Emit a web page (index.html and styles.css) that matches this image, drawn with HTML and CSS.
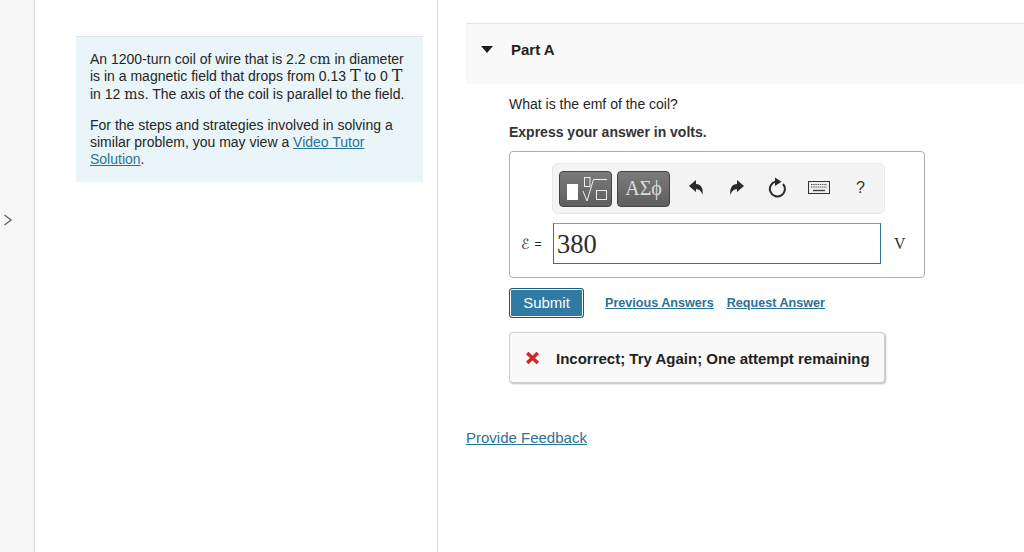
FILE: index.html
```html
<!DOCTYPE html>
<html lang="en">
<head>
<meta charset="utf-8">
<title>Part A</title>
<link rel="stylesheet" href="styles.css">
</head>
<body>
<div class="page">
  <aside class="rail">
    <svg class="rail-icon" width="10" height="12" viewBox="0 0 10 12"><path d="M1.5 1 L8 6 L1.5 11" fill="none" stroke="#666" stroke-width="1.4"/></svg>
  </aside>
  <section class="left">
    <div class="info">
      <p class="para">An 1200-turn coil of wire that is 2.2 <span class="math">cm</span> in diameter is in a magnetic field that drops from 0.13 <span class="math math-t">T</span> to 0 <span class="math math-t">T</span> in 12 <span class="math">ms</span>. The axis of the coil is parallel to the field.</p>
      <p class="para para-last">For the steps and strategies involved in solving a similar problem, you may view a <a class="link" href="#">Video Tutor Solution</a>.</p>
    </div>
  </section>
  <main class="right">
    <header class="part-head">
      <svg class="caret" width="12" height="7" viewBox="0 0 12 7"><path d="M0 0 H12 L6 7 Z" fill="#1c1c1c"/></svg>
      <h2 class="part-title">Part A</h2>
    </header>
    <div class="part-body">
      <p class="question">What is the emf of the coil?</p>
      <p class="express">Express your answer in volts.</p>
      <div class="answer">
        <div class="toolbar">
          <button class="tool-btn tool-templates" type="button" aria-label="Templates">
            <svg width="44" height="28" viewBox="0 0 44 28">
              <rect x="3" y="8" width="11" height="16" fill="#fff"/>
              <rect x="20.5" y="1.5" width="5.5" height="9" fill="none" stroke="#eee"/>
              <path d="M19 15 L23 25 L29.5 3.5 H43" fill="none" stroke="#eee" stroke-width="1"/>
              <rect x="32.5" y="14.5" width="10" height="9" fill="none" stroke="#eee"/>
            </svg>
          </button>
          <button class="tool-btn tool-greek" type="button">ΑΣϕ</button>
          <div class="tool-icons">
            <span class="tool-slot"><svg width="16" height="18" viewBox="0 0 16 18"><path d="M1 7 L8 1 V5 C13 5 15.5 9 14.5 16 C13.5 12 11 10 8 10 V13 Z" fill="#2a2a2a"/></svg></span>
            <span class="tool-slot"><svg width="16" height="18" viewBox="0 0 16 18"><path d="M15 7 L8 1 V5 C3 5 0.5 9 1.5 16 C2.5 12 5 10 8 10 V13 Z" fill="#2a2a2a"/></svg></span>
            <span class="tool-slot"><svg width="19" height="21" viewBox="0 0 19 21"><path d="M8 4.6 A7.5 7.5 0 1 0 15 7" fill="none" stroke="#2a2a2a" stroke-width="2"/><path d="M7 0.5 L13.5 4.8 L7 9 Z" fill="#2a2a2a"/></svg></span>
            <span class="tool-slot"><svg width="22" height="13" viewBox="0 0 22 13"><rect x="0.5" y="0.5" width="21" height="12" fill="#eee" stroke="#333"/><path d="M3 3.5 H19 M3 6 H19" stroke="#555" stroke-width="1.2" stroke-dasharray="1.4 .8"/><path d="M5 9.5 H17" stroke="#444" stroke-width="1.4"/></svg></span>
            <span class="tool-slot tool-help">?</span>
          </div>
        </div>
        <div class="entry">
          <span class="entry-label"><i class="script">ℰ</i><span class="equals">=</span></span>
          <div class="entry-input">380</div>
          <span class="unit">V</span>
        </div>
      </div>
      <div class="actions">
        <button class="submit" type="button">Submit</button>
        <a class="action-link" href="#">Previous Answers</a>
        <a class="action-link" href="#">Request Answer</a>
      </div>
      <div class="feedback">
        <svg class="x-icon" width="15" height="14" viewBox="0 0 15 14"><path d="M2.2 2 L12.8 12 M12.8 2 L2.2 12" stroke="#d2262b" stroke-width="3.6"/></svg>
        <span class="feedback-text">Incorrect; Try Again; One attempt remaining</span>
      </div>
    </div>
    <a class="provide" href="#">Provide Feedback</a>
  </main>
</div>
</body>
</html>
```
FILE: styles.css
```css
* { box-sizing: border-box; }
html, body { margin: 0; height: 100%; overflow: hidden; background: #fff; }
body { font-family: "Liberation Sans", Arial, sans-serif; color: #262626; font-size: 14px; }
.page { display: grid; grid-template-columns: 35px 403px 1fr; height: 552px; }
.rail { background: #f6f6f6; border-right: 1px solid #d9d9d9; padding-top: 214px; padding-left: 3px; }
.rail-icon { display: block; }
.left { border-right: 1px solid #d9d9d9; padding: 36px 14px 0 41px; }
.info { height: 146px; background: #e9f5f8; border-top: 1px solid #dfe4e6; padding: 14px 14px 0 14px; }
.para { margin: 0 0 14px; line-height: 17.3px; font-size: 14px; }
.para-last { margin-bottom: 0; }
.math { font-family: "DejaVu Serif", serif; font-size: 14px; line-height: 1; }
.math-t { font-size: 16px; }
.link { color: #2a7397; text-decoration: underline; }
.right { padding: 23px 0 0 28px; }
.part-head { display: flex; align-items: flex-start; height: 61px; background: #f9f9f9; border-top: 1px solid #e4e4e4; padding: 22px 0 0 15px; }
.caret { display: block; flex: none; }
.part-title { margin: -5px 0 0 18px; font-size: 15px; line-height: 17px; font-weight: 700; color: #222; }
.part-body { padding: 12px 0 0 43px; }
.question { margin: 0; line-height: 17px; font-size: 14px; }
.express { margin: 11px 0 0; line-height: 17px; font-size: 14px; font-weight: 700; color: #333; }
.answer { width: 416px; height: 127px; margin-top: 10px; border: 1px solid #aeaeae; border-radius: 4px; padding: 11px 0 0 42px; }
.toolbar { display: flex; align-items: center; width: 333px; height: 51px; background: #f4f4f4; border: 1px solid #e8e8e8; border-radius: 6px; padding-left: 6px; }
.tool-btn { display: flex; align-items: center; justify-content: center; width: 53px; height: 36px; padding: 0; border: 1px solid #444; border-radius: 4px; background: linear-gradient(#7b7b7b, #5e5e5e); color: #ddd; }
.tool-templates { padding-top: 2px; }
.tool-greek { margin-left: 5px; font-family: "Liberation Serif", serif; font-size: 20px; }
.tool-icons { display: flex; align-items: center; flex: 1; padding: 0 0 2px 5px; }
.tool-slot { display: flex; align-items: center; justify-content: center; width: 41px; flex: none; }
.tool-help { font-size: 16px; color: #333; padding-left: 2px; }
.entry { display: flex; align-items: center; margin: 9px 0 0 -31px; height: 41px; }
.entry-label { display: flex; align-items: center; gap: 5px; width: 31px; white-space: nowrap; }
.script { font-family: "DejaVu Sans", sans-serif; font-size: 14px; line-height: 1; }
.equals { font-size: 12px; }
.entry-input { width: 328px; height: 41px; margin-left: 1px; border: 1px solid #2f7396; border-top-color: #75a5bd; background: #fff; padding-left: 3px; font-family: "Liberation Serif", serif; font-size: 26.5px; line-height: 40px; color: #2c2c2c; }
.unit { margin-left: 13px; font-family: "Liberation Serif", serif; font-size: 16px; color: #333; }
.actions { display: flex; align-items: center; margin-top: 10px; }
.submit { width: 75px; height: 30px; padding: 0 0 1px; background: #2f7ba3; color: #fff; border: 1px solid #1c5679; box-shadow: inset 0 0 0 1px #fff; border-radius: 3px; font-family: inherit; font-size: 15px; }
.action-link { margin-left: 21px; color: #2a7397; font-size: 12.6px; font-weight: 700; text-decoration: underline; }
.action-link + .action-link { margin-left: 13px; }
.feedback { display: flex; align-items: center; width: 376px; height: 51px; margin-top: 14px; padding: 1px 0 0 15px; background: #f9f9f9; border: 1px solid #cfcfcf; border-radius: 4px; box-shadow: 1px 1px 2px #bbb; }
.x-icon { display: block; flex: none; }
.feedback-text { margin-left: 16px; font-size: 15px; font-weight: 700; color: #222; white-space: nowrap; }
.provide { display: inline-block; margin-top: 46px; font-size: 15px; line-height: 18px; color: #2a7397; text-decoration: underline; }
```
